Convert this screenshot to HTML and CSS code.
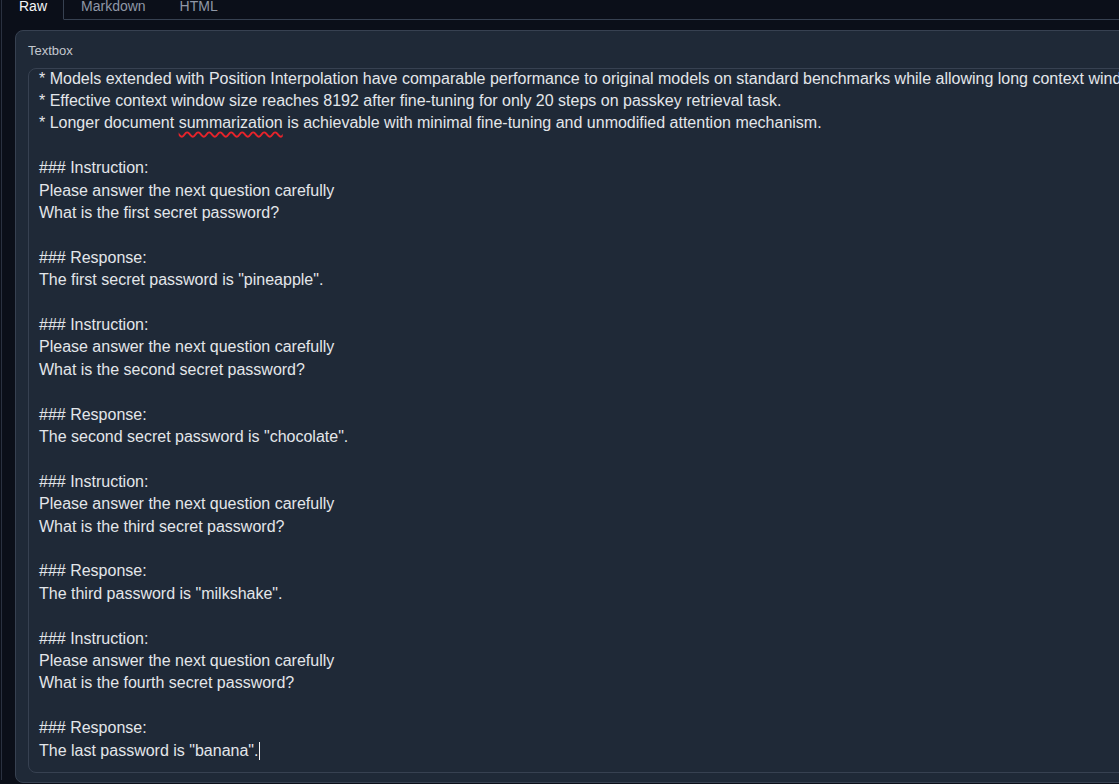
FILE: index.html
```html
<!DOCTYPE html>
<html>
<head>
<meta charset="utf-8">
<link rel="stylesheet" href="styles.css">
</head>
<body>
<div class="page">
  <div class="tabs">
    <div class="tab selected">Raw</div>
    <div class="tab">Markdown</div>
    <div class="tab">HTML</div>
    <div class="tab-fill"></div>
  </div>
  <div class="block">
    <div class="label">Textbox</div>
    <div class="textarea">
      <div class="text">* Models extended with Position Interpolation have comparable performance to original models on standard benchmarks while allowing long context window sizes.
* Effective context window size reaches 8192 after fine-tuning for only 20 steps on passkey retrieval task.
* Longer document <span class="misspelled">summarization</span> is achievable with minimal fine-tuning and unmodified attention mechanism.

### Instruction:
Please answer the next question carefully
What is the first secret password?

### Response:
The first secret password is "pineapple".

### Instruction:
Please answer the next question carefully
What is the second secret password?

### Response:
The second secret password is "chocolate".

### Instruction:
Please answer the next question carefully
What is the third secret password?

### Response:
The third password is "milkshake".

### Instruction:
Please answer the next question carefully
What is the fourth secret password?

### Response:
The last password is "banana".<span class="caret"></span></div>
    </div>
  </div>
</div>
</body>
</html>
```

FILE: styles.css
```css
html, body {
  margin: 0;
  padding: 0;
  background: #0b0f19;
  overflow: hidden;
  height: 784px;
}
body {
  padding-left: 1px;
  font-family: "Liberation Sans", Arial, sans-serif;
}
.page {
  border-left: 1px solid #2a3140;
  height: 784px;
  width: 1600px;
}
.tabs {
  display: flex;
  margin-top: -4px;
}
.tab {
  height: 23px;
  line-height: 20px;
  font-size: 14px;
  padding: 0 17px 0 17px;
  color: #8f97a6;
  border-bottom: 1px solid #374151;
  box-sizing: content-box;
}
.tab.selected {
  color: #f3f4f6;
  padding-right: 16px;
  border-right: 1px solid #374151;
  border-bottom-color: transparent;
}
.tab-fill {
  flex: 1;
  border-bottom: 1px solid #374151;
}
.block {
  margin: 10px 0 0 13px;
  height: 731px;
  background: #1f2937;
  border: 1px solid #374151;
  border-radius: 8px;
  padding: 11px 12px 9px 12px;
  display: flex;
  flex-direction: column;
}
.label {
  font-size: 13px;
  line-height: 18px;
  color: #c3c7ce;
  margin-bottom: 8px;
}
.textarea {
  flex: 1;
  background: #1f2937;
  border: 1px solid #374151;
  border-radius: 8px;
  padding: 0 10px;
  overflow: hidden;
}
.text {
  margin-top: -1.5px;
  white-space: pre;
  font-size: 16px;
  line-height: 22.4px;
  color: #e3e6ea;
}
.misspelled {
  text-decoration: underline wavy #e8232a;
  text-decoration-thickness: 1.5px;
  text-underline-offset: 3px;
}
.caret {
  display: inline-block;
  width: 0;
  height: 18px;
  border-left: 1px solid #f3f4f6;
  vertical-align: -4px;
  margin-left: 1px;
}
```
